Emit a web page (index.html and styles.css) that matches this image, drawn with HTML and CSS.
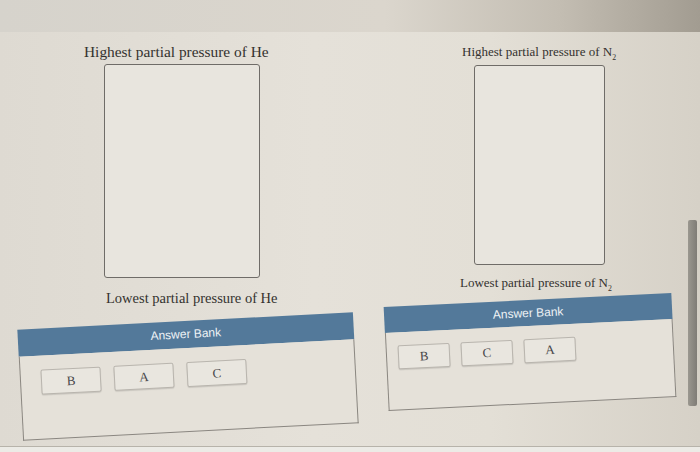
FILE: index.html
```html
<!DOCTYPE html>
<html>
  <head>
    <meta charset="UTF-8" />
    <title>Partial Pressure Ranking</title>
    <link rel="stylesheet" href="styles.css">
  </head>
  <body>
    <div class="topbar"></div>
    <div class="page">
      <div class="columns">
        <!-- helium ranking -->
        <div class="col col-he">
          <div class="label top-label">Highest partial pressure of He</div>
          <div class="dropzone"></div>
          <div class="label low-label">Lowest partial pressure of He</div>
          <div class="bank">
            <div class="bank-head">Answer Bank</div>
            <div class="bank-body">
              <div class="chip">B</div>
              <div class="chip">A</div>
              <div class="chip">C</div>
            </div>
          </div>
        </div>

        <!-- nitrogen ranking -->
        <div class="col col-n2">
          <div class="label top-label">Highest partial pressure of N<sub>2</sub></div>
          <div class="dropzone"></div>
          <div class="label low-label">Lowest partial pressure of N<sub>2</sub></div>
          <div class="bank">
            <div class="bank-head">Answer Bank</div>
            <div class="bank-body">
              <div class="chip">B</div>
              <div class="chip">C</div>
              <div class="chip">A</div>
            </div>
          </div>
        </div>
      </div>
      <div class="scrollbar"></div>
    </div>
    <div class="footer"></div>
  </body>
</html>
```

FILE: styles.css
```css
/* question page */
body {
  margin: 0;
  width: 700px;
  height: 452px;
  overflow: hidden;
  font-family: "Liberation Serif", "Times New Roman", serif;
  color: #34322f;
  background: #dcd8cf;
}
.topbar {
  height: 32px;
  background: linear-gradient(to right, #d6d3cc 0%, #dbd6cd 55%, #c3bdb2 80%, #a29c91 100%);
}
.page {
  position: relative;
  height: 414px;
  background: linear-gradient(to right, #dedad2 0%, #e5e1d9 45%, #e3dfd6 70%, #d6d1c7 100%);
  border-bottom: 1px solid #b7b3aa;
}
.columns {
  display: flex;
}
.col {
  display: flex;
  flex-direction: column;
}
.col-he {
  margin-left: 20px;
  width: 336px;
}
.col-n2 {
  margin-left: 30px;
  width: 288px;
}
.label {
  white-space: nowrap;
}
.label sub {
  font-size: 0.6em;
  line-height: 0;
}
.dropzone {
  border: 1.5px solid #6f6c68;
  border-radius: 3px;
  background: #e8e5de;
}

/* left column sizes */
.col-he .top-label {
  padding-top: 9px;
  margin-left: 64px;
  font-size: 15.4px;
  line-height: 21px;
}
.col-he .dropzone {
  margin-left: 84px;
  margin-top: 2px;
  width: 154px;
  height: 212px;
}
.col-he .low-label {
  margin-left: 86px;
  margin-top: 10px;
  font-size: 14.5px;
  line-height: 20px;
}
.col-he .bank {
  margin-top: 13px;
  transform: rotate(-3deg);
}
.col-he .bank-head {
  height: 27px;
  line-height: 27px;
}
.col-he .bank-body {
  height: 84px;
  padding: 14px 20px 0;
  gap: 13px;
}
.col-he .chip {
  width: 58px;
  height: 23px;
  line-height: 23px;
}

/* right column sizes */
.col-n2 .top-label {
  padding-top: 11px;
  margin-left: 76px;
  font-size: 13px;
  line-height: 18px;
}
.col-n2 .dropzone {
  margin-left: 88px;
  margin-top: 4px;
  width: 129px;
  height: 198px;
}
.col-n2 .low-label {
  margin-left: 74px;
  margin-top: 9px;
  font-size: 13px;
  line-height: 18px;
}
.col-n2 .bank {
  margin-top: 8px;
  transform: rotate(-2.8deg);
}
.col-n2 .bank-head {
  height: 26px;
  line-height: 26px;
}
.col-n2 .bank-body {
  height: 78px;
  padding: 13px 11px 0;
  gap: 11px;
}
.col-n2 .chip {
  width: 50px;
  height: 22px;
  line-height: 22px;
}

/* answer bank */
.bank-head {
  background: #53799a;
  color: #eef2f5;
  text-align: center;
  font-family: "Liberation Sans", Arial, sans-serif;
  font-size: 12px;
}
.bank-body {
  display: flex;
  align-items: flex-start;
  box-sizing: border-box;
  background: #e5e1d9;
  border: 1px solid #8a8680;
  border-top: none;
}
.chip {
  border: 1px solid #b9b5ae;
  border-radius: 2px;
  background: #e9e6df;
  box-shadow: 0 1px 1px rgba(0, 0, 0, 0.12);
  text-align: center;
  font-size: 13px;
  color: #48464a;
}

.scrollbar {
  position: absolute;
  right: 3px;
  top: 188px;
  width: 9px;
  height: 186px;
  background: linear-gradient(to right, #9a978f, #7f7c76);
  border-radius: 2px;
}
.footer {
  height: 5px;
  background: #ecebe6;
}
```
